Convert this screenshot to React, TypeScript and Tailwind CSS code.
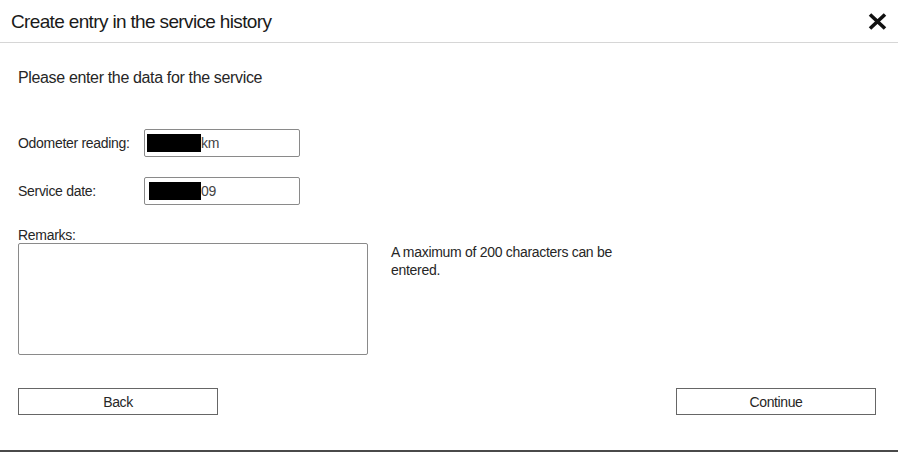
import React from "react";

export default function App() {
  const font = { fontFamily: '"Liberation Sans", Arial, sans-serif' };
  return (
    <div
      className="w-[898px] h-[452px] bg-white flex flex-col text-[#262626] overflow-hidden"
      style={font}
    >
      <div className="h-[43px] shrink-0 flex items-center justify-between pl-[11px] pr-[11px] border-b border-[#d6d6d6]">
        <h1 className="text-[19px] tracking-[-0.65px] leading-none text-[#1a1a1a] pt-[1px]">
          Create entry in the service history
        </h1>
        <button className="w-[20px] h-[18px] flex items-center justify-center">
          <svg width="19" height="17" viewBox="0 0 19 17">
            <path d="M2 1.5 L17 15.5 M17 1.5 L2 15.5" stroke="#111" strokeWidth="3.6" strokeLinecap="butt" />
          </svg>
        </button>
      </div>

      <div className="flex-1 flex flex-col px-[18px]">
        <p className="mt-[26px] text-[16px] leading-[18px] tracking-[-0.35px]">
          Please enter the data for the service
        </p>

        <div className="mt-[42px] flex items-center h-[28px]">
          <label className="w-[126px] text-[14px] tracking-[-0.3px]">Odometer reading:</label>
          <div className="w-[156px] h-[28px] border border-[#8a8a8a] rounded-[2px] flex items-center pl-[2px] text-[14px]">
            <span className="inline-block w-[54px] h-[18px] bg-black" />
            <span className="tracking-[-0.3px] text-[#444]">km</span>
          </div>
        </div>

        <div className="mt-[20px] flex items-center h-[28px]">
          <label className="w-[126px] text-[14px] tracking-[-0.3px]">Service date:</label>
          <div className="w-[156px] h-[28px] border border-[#8a8a8a] rounded-[2px] flex items-center pl-[4px] text-[14px]">
            <span className="inline-block w-[52px] h-[18px] bg-black" />
            <span className="tracking-[-0.3px] text-[#444]">09</span>
          </div>
        </div>

        <label className="mt-[23px] text-[14px] leading-[15px] tracking-[-0.3px]">Remarks:</label>
        <div className="flex items-start">
          <textarea className="w-[350px] h-[112px] border border-[#8a8a8a] rounded-[2px] resize-none outline-none" />
          <p className="ml-[23px] mt-[0px] w-[240px] text-[14px] leading-[18px] tracking-[-0.3px]">
            A maximum of 200 characters can be entered.
          </p>
        </div>

        <div className="mt-[33px] flex justify-between">
          <button className="w-[200px] h-[27px] border border-[#666] text-[14px] tracking-[-0.4px] flex items-center justify-center pt-[1px]">
            Back
          </button>
          <button className="mr-[4px] w-[200px] h-[27px] border border-[#666] text-[14px] tracking-[-0.4px] flex items-center justify-center pt-[1px]">
            Continue
          </button>
        </div>
      </div>

      <div className="h-[2px] bg-[#4a4a4a] shrink-0" />
    </div>
  );
}
